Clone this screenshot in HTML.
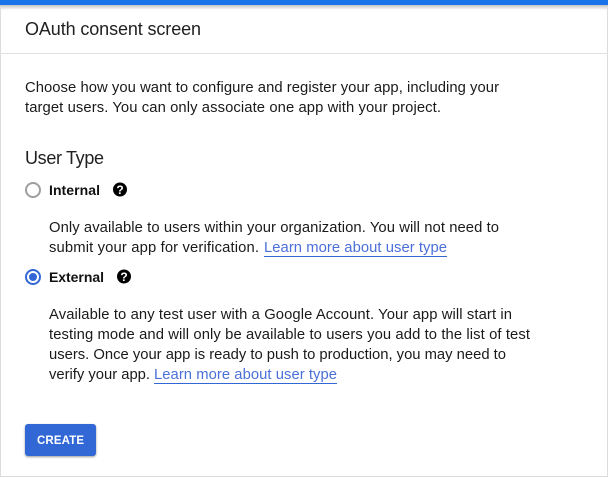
<!DOCTYPE html>
<html>
<head>
<meta charset="utf-8">
<style>
html,body{margin:0;padding:0;width:608px;height:478px;overflow:hidden;background:#fff}
svg{position:absolute;left:0;top:0;display:block}
text{font-family:"Liberation Sans",sans-serif;fill:#1a1a1a;font-size:14.8px}
.h{font-size:18px;fill:#212121}
.b{font-weight:bold;font-size:14px;fill:#111}
.l{fill:#4a6fd8}
</style>
</head>
<body>
<svg width="608" height="478" viewBox="0 0 608 478" xmlns="http://www.w3.org/2000/svg">
<defs>
<linearGradient id="s" x1="0" y1="0" x2="0" y2="1"><stop offset="0" stop-color="#c4c4c4"/><stop offset="1" stop-color="#fff"/></linearGradient>
<filter id="bs" x="-20%" y="-20%" width="140%" height="150%"><feDropShadow dx="0" dy="1" stdDeviation="1" flood-color="#000" flood-opacity=".4"/></filter>
</defs>
<rect x="0" y="5" width="608" height="5" fill="url(#s)"/>
<rect x="0" y="0" width="608" height="5" fill="#1a73e8"/>
<rect x="0" y="8" width="1" height="469" fill="#dcdcdc"/>
<rect x="607" y="8" width="1" height="469" fill="#dcdcdc"/>
<rect x="0" y="476" width="608" height="1" fill="#dcdcdc"/>
<rect x="0" y="53" width="608" height="1" fill="#e0e0e0"/>

<text class="h" x="25" y="35" textLength="176">OAuth consent screen</text>

<text x="25" y="92" textLength="474">Choose how you want to configure and register your app, including your</text>
<text x="25" y="112" textLength="416">target users. You can only associate one app with your project.</text>

<text class="h" x="25" y="164" textLength="79">User Type</text>

<circle cx="33" cy="190" r="7" fill="none" stroke="#9e9e9e" stroke-width="2"/>
<text class="b" x="49" y="195" textLength="51">Internal</text>
<circle cx="120" cy="189.5" r="7" fill="#000"/>
<text x="120" y="194" text-anchor="middle" style="font-size:12px;font-weight:bold;fill:#fff">?</text>

<text x="49" y="232" textLength="450">Only available to users within your organization. You will not need to</text>
<text x="49" y="252" textLength="210">submit your app for verification.</text>
<text class="l" x="264" y="252" textLength="183">Learn more about user type</text>
<rect x="264" y="256" width="183" height="1" fill="#3367d6"/>

<circle cx="33" cy="277" r="7" fill="none" stroke="#3367d6" stroke-width="2"/>
<circle cx="33" cy="277" r="4" fill="#3367d6"/>
<text class="b" x="49" y="282" textLength="55">External</text>
<circle cx="124" cy="276.5" r="7" fill="#000"/>
<text x="124" y="281" text-anchor="middle" style="font-size:12px;font-weight:bold;fill:#fff">?</text>

<text x="49" y="319" textLength="463">Available to any test user with a Google Account. Your app will start in</text>
<text x="49" y="339" textLength="481">testing mode and will only be available to users you add to the list of test</text>
<text x="49" y="359" textLength="457">users. Once your app is ready to push to production, you may need to</text>
<text x="49" y="379" textLength="101">verify your app.</text>
<text class="l" x="154" y="379" textLength="183">Learn more about user type</text>
<rect x="154" y="383" width="183" height="1" fill="#3367d6"/>

<rect x="25" y="424" width="71" height="32" rx="3" fill="#3367d6" filter="url(#bs)"/>
<text x="37" y="444" textLength="47" style="font-size:11.5px;font-weight:bold;fill:#fff">CREATE</text>
</svg>
</body>
</html>
